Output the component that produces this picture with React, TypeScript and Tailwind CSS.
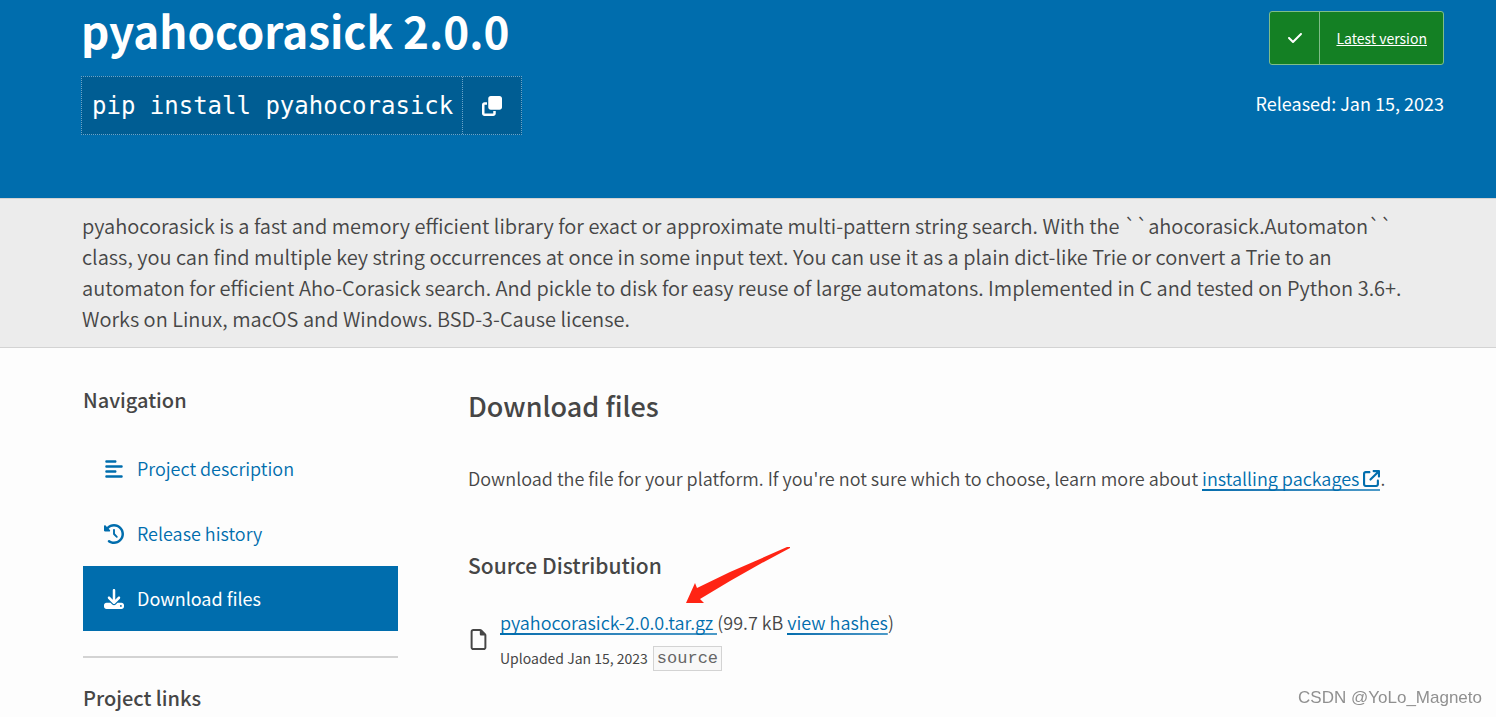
import { FaAlignLeft, FaArrowUpRightFromSquare, FaCheck, FaClockRotateLeft, FaClone, FaDownload, FaRegFile } from 'react-icons/fa6';

const navItems = [
  { name: 'Project description', href: '#description', icon: FaAlignLeft },
  { name: 'Release history', href: '#history', icon: FaClockRotateLeft },
  { name: 'Download files', href: '#files', icon: FaDownload, active: true },
];

// Underline is a background so it can fade towards the right
const linkClass = 'text-[#006dad] bg-linear-to-r from-[#006dad] to-[#4c9ac8] bg-[length:100%_2px] bg-bottom bg-no-repeat';

function PackageHeader() {
  return (
    <header className="bg-[#006dad] text-white pl-[81px] pr-[52px] pb-[63px] flex items-start justify-between">
      <div>
        <h1 className="text-[44px] leading-[60px] font-bold">pyahocorasick 2.0.0</h1>
        <div className="mt-4 inline-flex h-[59px] bg-[#005d93] border border-dotted border-[#6ba3c8]">
          <code className="flex items-center pl-[10px] pr-[9px] text-[24px] font-['DejaVu_Sans_Mono',monospace]">
            pip install pyahocorasick
          </code>
          <button type="button" aria-label="Copy install command" className="w-[59px] flex items-center justify-center border-l border-dotted border-[#6ba3c8]">
            <FaClone size={20} />
          </button>
        </div>
      </div>

      <div className="flex flex-col items-end pt-[11px]">
        <a href="#latest" className="flex h-[54px] bg-[#148024] border border-[#7fbd88] rounded-[3px]">
          <span className="w-[50px] flex items-center justify-center border-r border-[#7fbd88]">
            <FaCheck size={16} />
          </span>
          <span className="flex items-center px-4 text-[14px] underline underline-offset-1">Latest version</span>
        </a>
        <p className="mt-6 text-[18px] leading-[28px]">Released: Jan 15, 2023</p>
      </div>
    </header>
  );
}

function Sidebar() {
  return (
    <aside className="w-[315px] shrink-0">
      <h2 className="text-[20px] leading-[28px] font-medium mb-[22px]">Navigation</h2>
      <nav>
        {navItems.map((item) => (
          <a
            key={item.name}
            href={item.href}
            className={`flex items-center gap-[13px] h-[65px] px-[21px] text-[18px] ${item.active ? 'bg-[#006dad] text-white' : 'text-[#006dad] font-[350]'}`}
          >
            <item.icon size={20} />
            {item.name}
          </a>
        ))}
      </nav>
      <hr className="mt-[25px] border-t-2 border-[#d3d3d3]" />
      <h2 className="mt-[26px] text-[20px] leading-[28px] font-medium">Project links</h2>
    </aside>
  );
}

function DownloadFiles() {
  return (
    <main className="flex-1 min-w-0">
      <h2 className="text-[27px] leading-[40px] font-medium">Download files</h2>
      <p className="mt-[37px] text-[18px] leading-[30px] font-[350]">
        Download the file for your platform. If you're not sure which to choose, learn more about{' '}
        <a href="#installing" className={linkClass}>
          installing packages <FaArrowUpRightFromSquare size={17} className="inline align-[-1px]" />
        </a>
        .
      </p>

      <h3 className="mt-[57px] text-[21px] leading-[30px] font-medium">Source Distribution</h3>
      <div className="relative mt-[27px] flex items-center">
        <FaRegFile size={21} className="mr-[11px]" />
        <div className="font-[350]">
          <p className="text-[18px] leading-[30px]">
            <a href="#tarball" className={linkClass}>pyahocorasick-2.0.0.tar.gz </a>
            (99.7 kB <a href="#hashes" className={linkClass}>view hashes</a>)
          </p>
          <p className="mt-2 text-[14px] leading-[26px] font-normal flex items-center gap-[5px]">
            Uploaded Jan 15, 2023
            <code className="border border-[#d3d3d3] bg-[#f8f8f8] px-[3px] text-[17px] leading-[23px] text-[#666] font-['Liberation_Mono',monospace]">source</code>
          </p>
        </div>
        {/* Arrow pointing at the tarball */}
        <svg className="absolute left-[217px] -top-[61px]" width="106" height="58" viewBox="0 0 106 58" fill="#ff2414" aria-hidden="true">
          <path d="M105 1 L102 1 L75 13 L45 26 L12 42 L10 37 L1 57 L19 57 L15 53 L45 35 L75 18 L105 2 Z" />
        </svg>
      </div>
    </main>
  );
}

export default function App() {
  return (
    <div className="min-h-screen bg-[#fdfdfd] text-[#464646] font-['Noto_Sans_CJK_SC',sans-serif]">
      <PackageHeader />
      <div className="border-y border-[#d3d3d3] bg-[#ececec] px-[82px] pt-[11px] pb-[13px]">
        <p className="text-[20px] leading-[31px] font-[350]">
          pyahocorasick is a fast and memory efficient library for exact or approximate multi-pattern string search. With the ``ahocorasick.Automaton`` class, you can find multiple key string occurrences at once in some input text. You can use it as a plain dict-like Trie or convert a Trie to an automaton for efficient Aho-Corasick search. And pickle to disk for easy reuse of large automatons. Implemented in C and tested on Python 3.6+. Works on Linux, macOS and Windows. BSD-3-Cause license.
        </p>
      </div>
      <div className="flex gap-[70px] pl-[83px] pr-[52px] pt-[38px]">
        <Sidebar />
        <DownloadFiles />
      </div>
      <div className="fixed right-[14px] bottom-[7px] text-[17px] leading-[24px] text-[#909090] font-['Liberation_Sans',sans-serif]">
        CSDN @YoLo_Magneto
      </div>
    </div>
  );
}
